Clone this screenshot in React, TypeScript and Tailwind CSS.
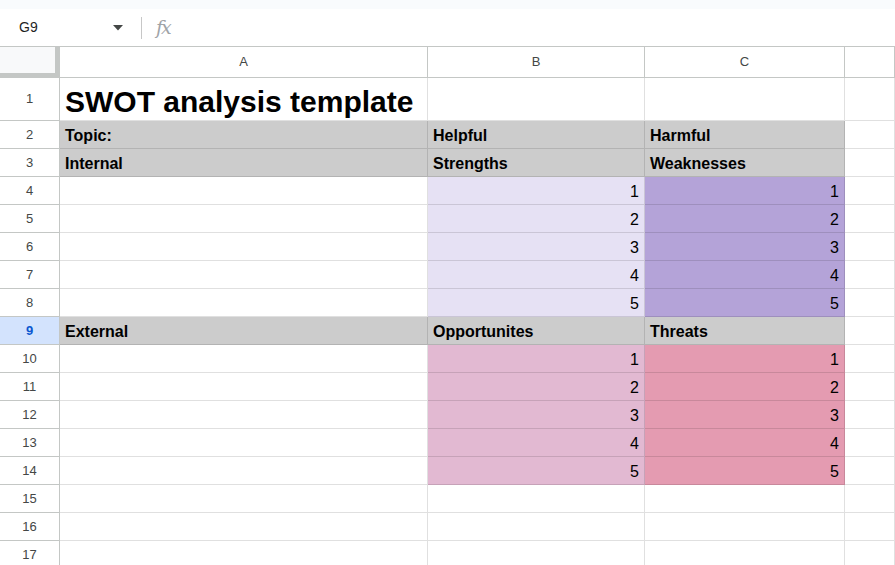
type Cell = {
  text?: string
  bg?: string
  bold?: boolean
  right?: boolean
  title?: boolean
}

const cols = ['A', 'B', 'C', '']

const gray = 'bg-[#cccccc]'
const lav = 'bg-[#e6e1f4]'
const purple = 'bg-[#b4a3d8]'
const blush = 'bg-[#e2b9d2]'
const rose = 'bg-[#e49bb1]'

function numberRows(left: string, right: string): Cell[][] {
  return [1, 2, 3, 4, 5].map((n) => [
    {},
    { text: String(n), bg: left, right: true },
    { text: String(n), bg: right, right: true },
    {},
  ])
}

const rows: Cell[][] = [
  [{ text: 'SWOT analysis template', title: true }, {}, {}, {}],
  [
    { text: 'Topic:', bg: gray, bold: true },
    { text: 'Helpful', bg: gray, bold: true },
    { text: 'Harmful', bg: gray, bold: true },
    {},
  ],
  [
    { text: 'Internal', bg: gray, bold: true },
    { text: 'Strengths', bg: gray, bold: true },
    { text: 'Weaknesses', bg: gray, bold: true },
    {},
  ],
  ...numberRows(lav, purple),
  [
    { text: 'External', bg: gray, bold: true },
    { text: 'Opportunites', bg: gray, bold: true },
    { text: 'Threats', bg: gray, bold: true },
    {},
  ],
  ...numberRows(blush, rose),
  [{}, {}, {}, {}],
  [{}, {}, {}, {}],
  [{}, {}, {}, {}],
]

const gridCols = 'grid grid-cols-[60px_368px_217px_200px_1fr]'

export default function App() {
  return (
    <div className="h-[565px] w-[895px] overflow-hidden bg-white font-['Liberation_Sans',Arial,sans-serif] text-black">
      <div className="h-[9px] bg-[#f9fbfd]" />

      <div className="flex h-[37px] items-center">
        <span className="w-[96px] pl-[19px] text-[14px] text-[#1f1f1f]">G9</span>
        <svg width="10" height="6" viewBox="0 0 10 6" className="ml-[17px]">
          <path d="M0 0h10L5 5.5z" fill="#444746" />
        </svg>
        <div className="ml-[18px] h-[22px] w-px bg-[#c7c7c7]" />
        <span className="ml-[14px] font-['DejaVu_Serif',serif] text-[19px] italic leading-none tracking-[-2px] text-[#a0a4a8]">
          fx
        </span>
      </div>

      <div className={`${gridCols} h-[32px] border-t border-[#c4c7c5]`}>
        <div className="border-r-[5px] border-b-[5px] border-[#c4c7c5] bg-[#f8f9fa]" />
        {cols.map((c, i) => (
          <div
            key={i}
            className="flex items-center justify-center border-r border-b border-[#c4c7c5] text-[13px] text-[#444746]"
          >
            {c}
          </div>
        ))}
      </div>

      {rows.map((row, r) => {
        const selected = r === 8
        return (
          <div key={r} className={`${gridCols} ${r === 0 ? 'h-[43px]' : 'h-[28px]'}`}>
            <div
              className={`flex items-center justify-center border-r border-b border-[#c4c7c5] text-[13px] ${
                selected ? 'bg-[#d3e3fd] font-bold text-[#0b57d0]' : 'text-[#444746]'
              }`}
            >
              {r + 1}
            </div>
            {row.map((cell, i) => (
              <div
                key={i}
                className={`flex items-end overflow-visible whitespace-nowrap border-r border-b border-[rgba(0,0,0,0.12)] px-[5px] ${
                  cell.bg ?? ''
                } ${cell.right ? 'justify-end' : ''} ${
                  cell.title ? 'pb-[3px] text-[30px] font-bold leading-none' : 'pb-[3px] text-[16px] leading-[18px]'
                } ${cell.bold ? 'font-bold' : ''}`}
              >
                {cell.text}
              </div>
            ))}
          </div>
        )
      })}
    </div>
  )
}
